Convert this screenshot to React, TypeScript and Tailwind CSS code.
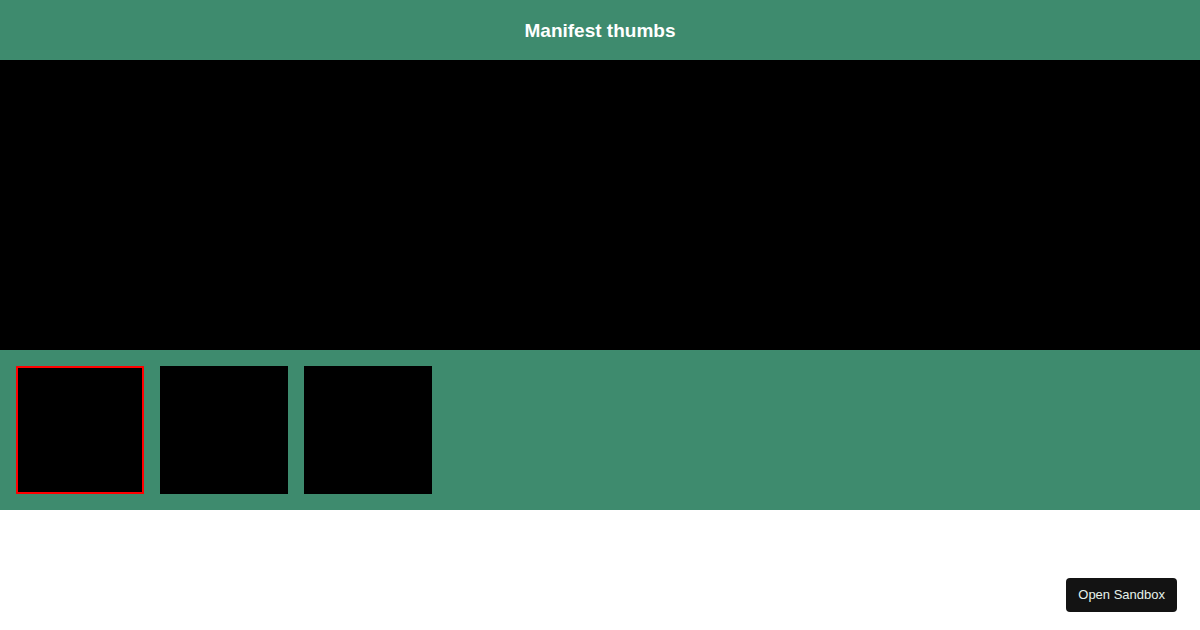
export default function App() {
  const thumbs = [0, 1, 2];
  return (
    <div className="min-h-screen bg-white font-['Liberation_Sans',Arial,sans-serif]">
      <header className="flex h-[60px] items-center justify-center bg-[#3e8b6e] pt-[2px]">
        <h1 className="text-[19px] font-bold text-white">Manifest thumbs</h1>
      </header>
      <div className="h-[290px] bg-black" />
      <div className="flex gap-4 bg-[#3e8b6e] p-4">
        {thumbs.map((i) => (
          <div
            key={i}
            className={`h-32 w-32 bg-black ${i === 0 ? 'border-2 border-[#ff0000]' : ''}`}
          />
        ))}
      </div>
      <button className="fixed bottom-[18px] right-[23px] h-[34px] rounded-[4px] bg-[#131313] px-3 text-[13px] text-[#e6f2ec]">
        Open Sandbox
      </button>
    </div>
  );
}
